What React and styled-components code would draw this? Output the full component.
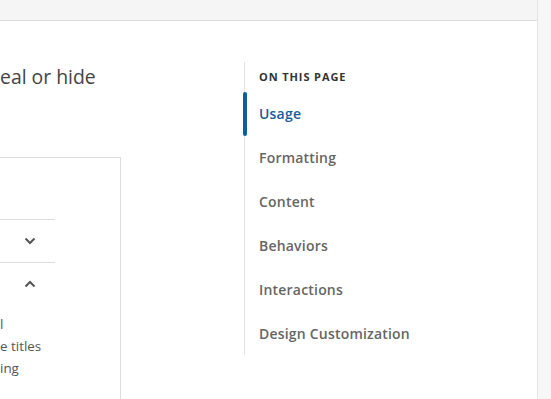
import React from 'react';
import styled, { createGlobalStyle } from 'styled-components';

const GlobalStyle = createGlobalStyle`
  html, body {
    margin: 0;
    padding: 0;
    background: #ffffff;
    font-family: 'Open Sans', 'Liberation Sans', sans-serif;
  }
`;

const Frame = styled.div`
  display: flex;
  width: 551px;
  height: 399px;
  overflow: hidden;
`;

const Main = styled.div`
  display: flex;
  flex-direction: column;
  width: 537px;
  flex-shrink: 0;
`;

const ScrollTrack = styled.div`
  flex: 1;
  background: #f7f7f7;
  border-left: 1px solid #e4e4e4;
`;

const TopBar = styled.div`
  height: 20px;
  background: #f5f5f5;
  border-bottom: 1px solid #dddddd;
`;

const Body = styled.div`
  display: flex;
  flex: 1;
  min-height: 0;
`;

const Article = styled.div`
  width: 244px;
  flex-shrink: 0;
  overflow: hidden;
`;

const Heading = styled.h2`
  margin: 42px 0 0;
  font-size: 19.4px;
  font-weight: 400;
  line-height: 28px;
  color: #444444;
  white-space: nowrap;
`;

const Card = styled.div`
  margin-top: 66px;
  width: 120px;
  height: 260px;
  border-top: 1px solid #dddddd;
  border-right: 1px solid #dddddd;
`;

const CardList = styled.div`
  width: 55px;
  padding-top: 61px;
`;

const AccordionRow = styled.div`
  display: flex;
  align-items: center;
  justify-content: flex-end;
  height: 42px;
  padding-right: 19px;
  border-top: 1px solid #dddddd;
  color: #555555;
`;

const Chevron = ({ up }) => (
  <svg width="12" height="8" viewBox="0 0 12 8" fill="none">
    <path
      d={up ? 'M1.5 6.5 L6 2 L10.5 6.5' : 'M1.5 1.5 L6 6 L10.5 1.5'}
      stroke="currentColor"
      strokeWidth="2"
    />
  </svg>
);

const PanelText = styled.div`
  margin-top: 8px;
  font-size: 13.4px;
  line-height: 22px;
  color: #555555;
  white-space: nowrap;
`;

const Nav = styled.nav`
  margin-top: 41px;
  height: 293px;
  border-left: 1px solid #e2e2e2;
  padding-left: 14px;
`;

const NavTitle = styled.div`
  height: 26px;
  margin-bottom: 4px;
  padding-top: 2px;
  box-sizing: border-box;
  line-height: 26px;
  font-size: 11px;
  font-weight: 700;
  letter-spacing: 0.9px;
  color: #333333;
  text-transform: uppercase;
`;

const NavItem = styled.a`
  position: relative;
  display: block;
  height: 44px;
  line-height: 44px;
  font-size: 14px;
  font-weight: 600;
  letter-spacing: 0.2px;
  color: ${props => (props.active ? '#15609a' : '#666666')};
  text-decoration: none;
  white-space: nowrap;

  &::before {
    content: '';
    display: ${props => (props.active ? 'block' : 'none')};
    position: absolute;
    left: -16px;
    top: 0;
    bottom: 0;
    width: 4px;
    border-radius: 2px;
    background: #0d5f99;
  }
`;

const sections = ['Usage', 'Formatting', 'Content', 'Behaviors', 'Interactions', 'Design Customization'];

export default function App () {
  return (
    <Frame>
      <GlobalStyle />
      <Main>
        <TopBar />
        <Body>
          <Article>
            <Heading>eal or hide</Heading>
            <Card>
              <CardList>
                <AccordionRow><Chevron /></AccordionRow>
                <AccordionRow><Chevron up /></AccordionRow>
                <PanelText>
                  l<br />
                  e titles<br />
                  ing
                </PanelText>
              </CardList>
            </Card>
          </Article>
          <Nav>
            <NavTitle>On this page</NavTitle>
            {sections.map((name, i) => (
              <NavItem key={name} href='#' active={i === 0 ? 1 : 0}>{name}</NavItem>
            ))}
          </Nav>
        </Body>
      </Main>
      <ScrollTrack />
    </Frame>
  );
}
